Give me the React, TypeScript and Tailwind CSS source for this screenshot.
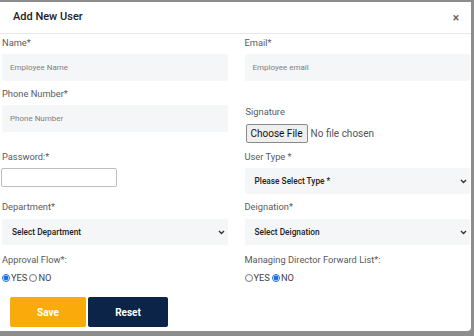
import React from 'react'

const font = { fontFamily: 'Roboto, "Liberation Sans", sans-serif' }

function Label({ children }: { children: React.ReactNode }) {
  return <div className="h-[14px] text-[9.3px] leading-[14px] text-[#5a5a5a]">{children}</div>
}

function TextBox({ placeholder }: { placeholder: string }) {
  return (
    <div className="mt-[4px] flex h-[27px] items-center rounded-[2px] bg-[#f5f6f8] pl-[8px] text-[8px] text-[#808080]">
      {placeholder}
    </div>
  )
}

function SelectBox({ text }: { text: string }) {
  return (
    <div className="flex h-[26px] items-center justify-between rounded-[2px] bg-[#f5f6f8] pl-[10px] pr-[3px]">
      <span className="text-[8.3px] font-medium text-[#222]">{text}</span>
      <svg width="7" height="5" viewBox="0 0 7 5" className="text-[#333]">
        <path d="M1 1l2.5 2.5L6 1" fill="none" stroke="currentColor" strokeWidth="1.4" />
      </svg>
    </div>
  )
}

function Radio({ checked, label }: { checked?: boolean; label: string }) {
  return (
    <label className="flex items-center">
      <input
        type="radio"
        defaultChecked={checked}
        className="m-0 h-[8px] w-[8px] accent-[#1a6fe0]"
      />
      <span className="ml-[1px] text-[9.3px] leading-[14px] text-[#444]">{label}</span>
    </label>
  )
}

export default function App() {
  return (
    <div className="h-[336px] w-[474px] bg-[#8d8d8d] pt-[2px] pr-[3px] pb-[5px]" style={font}>
      <div className="h-full w-full overflow-hidden rounded-br-[4px] bg-white">
        <header className="flex h-[32px] items-center justify-between border-b border-[#e8e8e8] pl-[13px] pr-[12px]">
          <h1 className="text-[11px] font-medium text-[#222]">Add New User</h1>
          <span className="text-[12px] font-semibold leading-none text-[#666]">×</span>
        </header>

        <div className="pl-[2px] pr-[1px]">
          <div className="mt-[2px] grid grid-cols-2 gap-x-[17px]">
            <div>
              <Label>Name*</Label>
              <TextBox placeholder="Employee Name" />
            </div>
            <div>
              <Label>Email*</Label>
              <TextBox placeholder="Employee email" />
            </div>
          </div>

          <div className="mt-[6px] grid grid-cols-2 gap-x-[17px]">
            <div>
              <Label>Phone Number*</Label>
              <TextBox placeholder="Phone Number" />
            </div>
            <div className="pt-[18px] pl-[1px]">
              <Label>Signature</Label>
              <div className="mt-[5px] flex items-center">
                <button className="h-[19px] rounded-[2px] border border-[#8a8a8a] bg-[#efefef] px-[4px] text-[10px] text-[#111]">
                  Choose File
                </button>
                <span className="ml-[3px] text-[10px] text-[#555]">No file chosen</span>
              </div>
            </div>
          </div>

          <div className="mt-[7px] grid grid-cols-2 gap-x-[17px]">
            <div>
              <Label>Password:*</Label>
              <div className="mt-[4px] ml-[-1px] h-[19px] w-[116px] rounded-[2px] border border-[#bdbdbd] bg-white" />
            </div>
            <div>
              <Label>User Type *</Label>
              <div className="mt-[4px]">
                <SelectBox text="Please Select Type *" />
              </div>
            </div>
          </div>

          <div className="mt-[6px] grid grid-cols-2 gap-x-[17px]">
            <div>
              <Label>Department*</Label>
              <div className="mt-[5px]">
                <SelectBox text="Select Department" />
              </div>
            </div>
            <div>
              <Label>Deignation*</Label>
              <div className="mt-[5px]">
                <SelectBox text="Select Deignation" />
              </div>
            </div>
          </div>

          <div className="mt-[8px] grid grid-cols-2 gap-x-[17px]">
            <div>
              <Label>Approval Flow*:</Label>
              <div className="mt-[4px] flex gap-x-[2px]">
                <Radio checked label="YES" />
                <Radio label="NO" />
              </div>
            </div>
            <div>
              <Label>Managing Director Forward List*:</Label>
              <div className="mt-[4px] flex gap-x-[2px]">
                <Radio label="YES" />
                <Radio checked label="NO" />
              </div>
            </div>
          </div>

          <div className="mt-[12px] flex gap-x-[2px] pl-[8px]">
            <button className="h-[30px] w-[76px] rounded-[2px] bg-[#f9ab0c] text-[10px] font-bold text-white">
              Save
            </button>
            <button className="h-[30px] w-[80px] rounded-[2px] bg-[#0c2447] text-[10px] font-bold text-white">
              Reset
            </button>
          </div>
        </div>
      </div>
    </div>
  )
}
